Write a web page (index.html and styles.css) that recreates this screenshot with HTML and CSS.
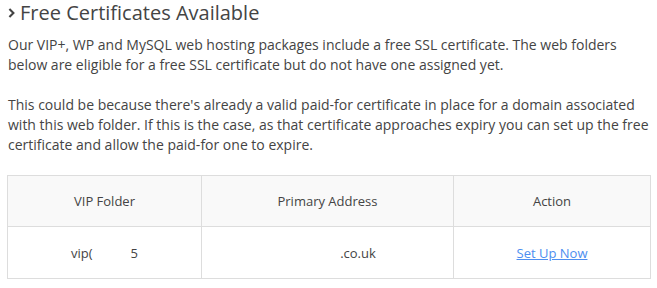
FILE: index.html
```html
<!DOCTYPE html>
<html>
<head>
<meta charset="utf-8">
<link rel="stylesheet" href="styles.css">
</head>
<body>
<div class="panel">
  <h2 class="title"><span class="chev"><svg width="8" height="12" viewBox="0 0 8 12"><path d="M1.4 2 L5.4 6 L1.4 10" fill="none" stroke="#444" stroke-width="2.1"/></svg></span>Free Certificates Available</h2>
  <div class="copy">
    <p>Our VIP+, WP and MySQL web hosting packages include a free SSL certificate. The web folders below are eligible for a free SSL certificate but do not have one assigned yet.</p>
    <p>This could be because there's already a valid paid-for certificate in place for a domain associated with this web folder. If this is the case, as that certificate approaches expiry you can set up the free certificate and allow the paid-for one to expire.</p>
  </div>
  <table class="certs">
    <colgroup><col class="c1"><col class="c2"><col class="c3"></colgroup>
    <thead>
      <tr><th>VIP Folder</th><th>Primary Address</th><th>Action</th></tr>
    </thead>
    <tbody>
      <tr>
        <td>vip(<span class="gap1"></span>5</td>
        <td><span class="gap2"></span>.co.uk</td>
        <td><a href="#" class="link">Set Up Now</a></td>
      </tr>
    </tbody>
  </table>
</div>
</body>
</html>
```
FILE: styles.css
```css
html, body { margin: 0; padding: 0; background: #fff; }
body { font-family: "Open Sans", "Liberation Sans", sans-serif; color: #444; }
.panel { padding: 0 7px 0 8px; }
.title {
  margin: 0;
  font-weight: 400;
  font-size: 20px;
  line-height: 26px;
  color: #444;
  display: flex;
  align-items: center;
}
.chev { display: inline-flex; width: 12px; }
.copy { font-size: 14px; line-height: 20px; color: #444; margin-top: 9px; }
.copy p { margin: 0 0 20px 0; }
.certs {
  width: 643px;
  table-layout: fixed;
  border-collapse: collapse;
  margin: 13px 0 0 -1px;
  font-size: 13px;
}
.c1 { width: 194px; }
.c2 { width: 252px; }
.c3 { width: 197px; }
.certs th, .certs td { border: 1px solid #ddd; text-align: center; height: 50px; padding: 0; color: #444; }
.certs td { height: 51px; }
.certs th { background: #f9f9f9; font-weight: 400; }
.gap1 { display: inline-block; width: 38px; }
.gap2 { display: inline-block; width: 61px; }
.link { color: #4d8ef0; text-decoration: underline; }
```
